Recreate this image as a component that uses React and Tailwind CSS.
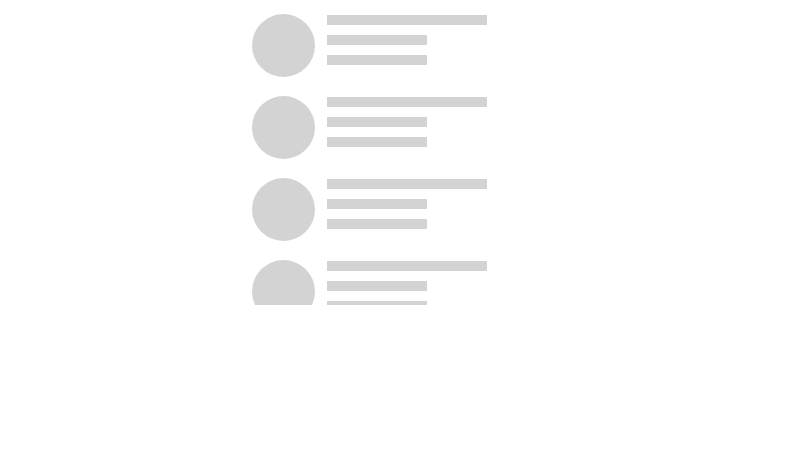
import React from 'react';

// SkeletonRow - placeholder avatar + three text lines
const SkeletonRow = () => (
  <div className="flex items-start gap-3">
    <div className="w-[63px] h-[63px] rounded-full bg-[#d3d3d3] shrink-0"></div>
    <div className="flex flex-col gap-[10px] pt-px">
      <div className="w-40 h-[10px] bg-[#d3d3d3]"></div>
      <div className="w-[100px] h-[10px] bg-[#d3d3d3]"></div>
      <div className="w-[100px] h-[10px] bg-[#d3d3d3]"></div>
    </div>
  </div>
);

const App = () => {
  return (
    <div className="w-[800px] h-[450px] bg-white">
      <div className="h-[305px] overflow-hidden pt-[14px] pl-[252px] flex flex-col gap-[19px]">
        {[0, 1, 2, 3].map((i) => (
          <SkeletonRow key={i} />
        ))}
      </div>
    </div>
  );
};

export default App;
